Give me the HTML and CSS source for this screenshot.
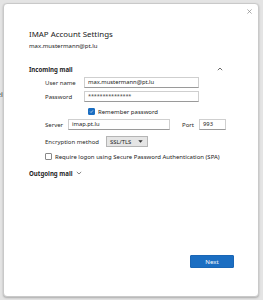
FILE: index.html
```html
<!DOCTYPE html>
<html>
<head>
<meta charset="utf-8">
<link rel="stylesheet" href="styles.css">
</head>
<body>
<span class="behind">ei</span>
<div class="window">
  <div class="topbar">
    <svg class="close" width="5" height="5" viewBox="0 0 5 5"><path d="M0.4 0.4L4.6 4.6M4.6 0.4L0.4 4.6" stroke="#8a8a8a" stroke-width="0.7" fill="none"/></svg>
  </div>
  <div class="content">
    <h1 class="title">IMAP Account Settings</h1>
    <div class="email">max.mustermann@pt.lu</div>

    <div class="section-head">
      <span class="section-title">Incoming mail</span>
      <svg class="chev-up" width="6" height="4" viewBox="0 0 6 4"><path d="M0.8 3.2L3 1L5.2 3.2" stroke="#444" stroke-width="0.8" fill="none"/></svg>
    </div>

    <div class="form">
      <div class="row">
        <label class="lbl lbl-user">User name</label>
        <div class="input w-user">max.mustermann@pt.lu</div>
      </div>
      <div class="row">
        <label class="lbl lbl-user">Password</label>
        <div class="input w-user pw">***************</div>
      </div>
      <div class="row check-row remember">
        <span class="cb checked"><svg width="7" height="7" viewBox="0 0 7 7"><path d="M1.6 3.6L2.9 4.9L5.5 2" stroke="#fff" stroke-width="0.9" fill="none"/></svg></span>
        <span class="cb-text">Remember password</span>
      </div>
      <div class="row server-row">
        <label class="lbl lbl-server">Server</label>
        <div class="input w-server">imap.pt.lu</div>
        <label class="lbl lbl-port">Port</label>
        <div class="input w-port">993</div>
      </div>
      <div class="row enc-row">
        <label class="lbl lbl-enc">Encryption method</label>
        <div class="select"><span>SSL/TLS</span><svg width="5" height="3" viewBox="0 0 5 3"><path d="M0.3 0.3H4.7L2.5 2.8Z" fill="#333"/></svg></div>
      </div>
      <div class="row check-row spa">
        <span class="cb"></span>
        <span class="cb-text">Require logon using Secure Password Authentication (SPA)</span>
      </div>
    </div>

    <div class="section-head outgoing">
      <span class="section-title">Outgoing mail</span>
      <svg class="chev-down" width="6" height="4" viewBox="0 0 6 4"><path d="M0.8 0.9L3 3L5.2 0.9" stroke="#666" stroke-width="0.8" fill="none"/></svg>
    </div>
  </div>
  <div class="footer">
    <button class="next">Next</button>
  </div>
</div>
</body>
</html>
```

FILE: styles.css
```css
* { box-sizing: border-box; }
html, body { margin: 0; padding: 0; }
body {
  width: 263px;
  height: 300px;
  background: #e4e4e4;
  font-family: "Noto Sans", "Open Sans", sans-serif;
  color: #1f1f1f;
  padding: 3px 4px 3px 3px;
  position: relative;
  overflow: hidden;
}
.behind {
  position: absolute;
  left: -3px;
  top: 90px;
  font-size: 7px;
  color: #333;
}
.window {
  position: relative;
  width: 256px;
  height: 294px;
  background: #fff;
  border: 1px solid #c9c9c9;
  border-radius: 4px;
  box-shadow: 0 1px 2px rgba(0,0,0,0.25);
  display: flex;
  flex-direction: column;
}
.topbar {
  height: 24px;
  display: flex;
  justify-content: flex-end;
  padding: 5px 6px 0 0;
}
.close { display: block; }
.content {
  padding-left: 25px;
  flex: 1;
}
.title {
  margin: 0;
  font-weight: 400;
  font-size: 7.9px;
  line-height: 13px;
  color: #1a1a1a;
}
.email {
  font-size: 6px;
  line-height: 10px;
  color: #222;
}
.section-head {
  display: flex;
  align-items: center;
  height: 10px;
  margin-top: 13px;
  width: 194px;
  justify-content: space-between;
}
.section-title {
  font-weight: 700;
  font-size: 6.1px;
  color: #1f1f1f;
}
.form {
  padding-left: 16px;
  margin-top: 2px;
}
.row {
  display: flex;
  align-items: center;
  height: 11px;
  margin-top: 3px;
  font-size: 6px;
}
.lbl { color: #2a2a2a; }
.lbl-user { width: 39px; }
.lbl-server { width: 23px; }
.lbl-port { width: 17px; margin-left: 12px; }
.lbl-enc { width: 61px; }
.input {
  height: 11px;
  border: 1px solid #cfcfcf;
  border-bottom-color: #9a9a9a;
  padding-left: 3px;
  font-size: 5.8px;
  line-height: 9px;
  color: #222;
}
.w-user { width: 115px; }
.w-server { width: 102px; }
.w-port { width: 27px; }
.pw { font-size: 5.6px; letter-spacing: -0.2px; color: #444; }
.check-row { height: 7px; margin-top: 6px; }
.remember { padding-left: 43px; }
.server-row { margin-top: 4px; }
.enc-row { margin-top: 6px; }
.spa { margin-top: 6px; }
.cb {
  width: 7px;
  height: 7px;
  border: 1px solid #888;
  border-radius: 1px;
  display: flex;
  align-items: center;
  justify-content: center;
}
.cb.checked {
  background: #1b6ec2;
  border-color: #1b6ec2;
}
.cb svg { display: block; }
.cb-text { margin-left: 3px; color: #222; }
.select {
  width: 42px;
  height: 11px;
  background: #e5e5e5;
  border: 1px solid #b5b5b5;
  display: flex;
  align-items: center;
  justify-content: space-between;
  padding: 0 4px 0 3px;
  font-size: 5.9px;
  color: #1a1a1a;
}
.select svg { display: block; }
.outgoing {
  margin-top: 8px;
  width: auto;
  justify-content: flex-start;
}
.chev-down { margin-left: 3px; }
.footer {
  display: flex;
  justify-content: flex-end;
  padding: 0 24px 28px 0;
}
.next {
  width: 44px;
  height: 13px;
  background: #1b6ec2;
  border: 1px solid #1a66b5;
  border-radius: 1px;
  color: #fff;
  font-family: "Noto Sans", "Open Sans", sans-serif;
  font-size: 6.1px;
  padding: 0;
  line-height: 11px;
}
```
